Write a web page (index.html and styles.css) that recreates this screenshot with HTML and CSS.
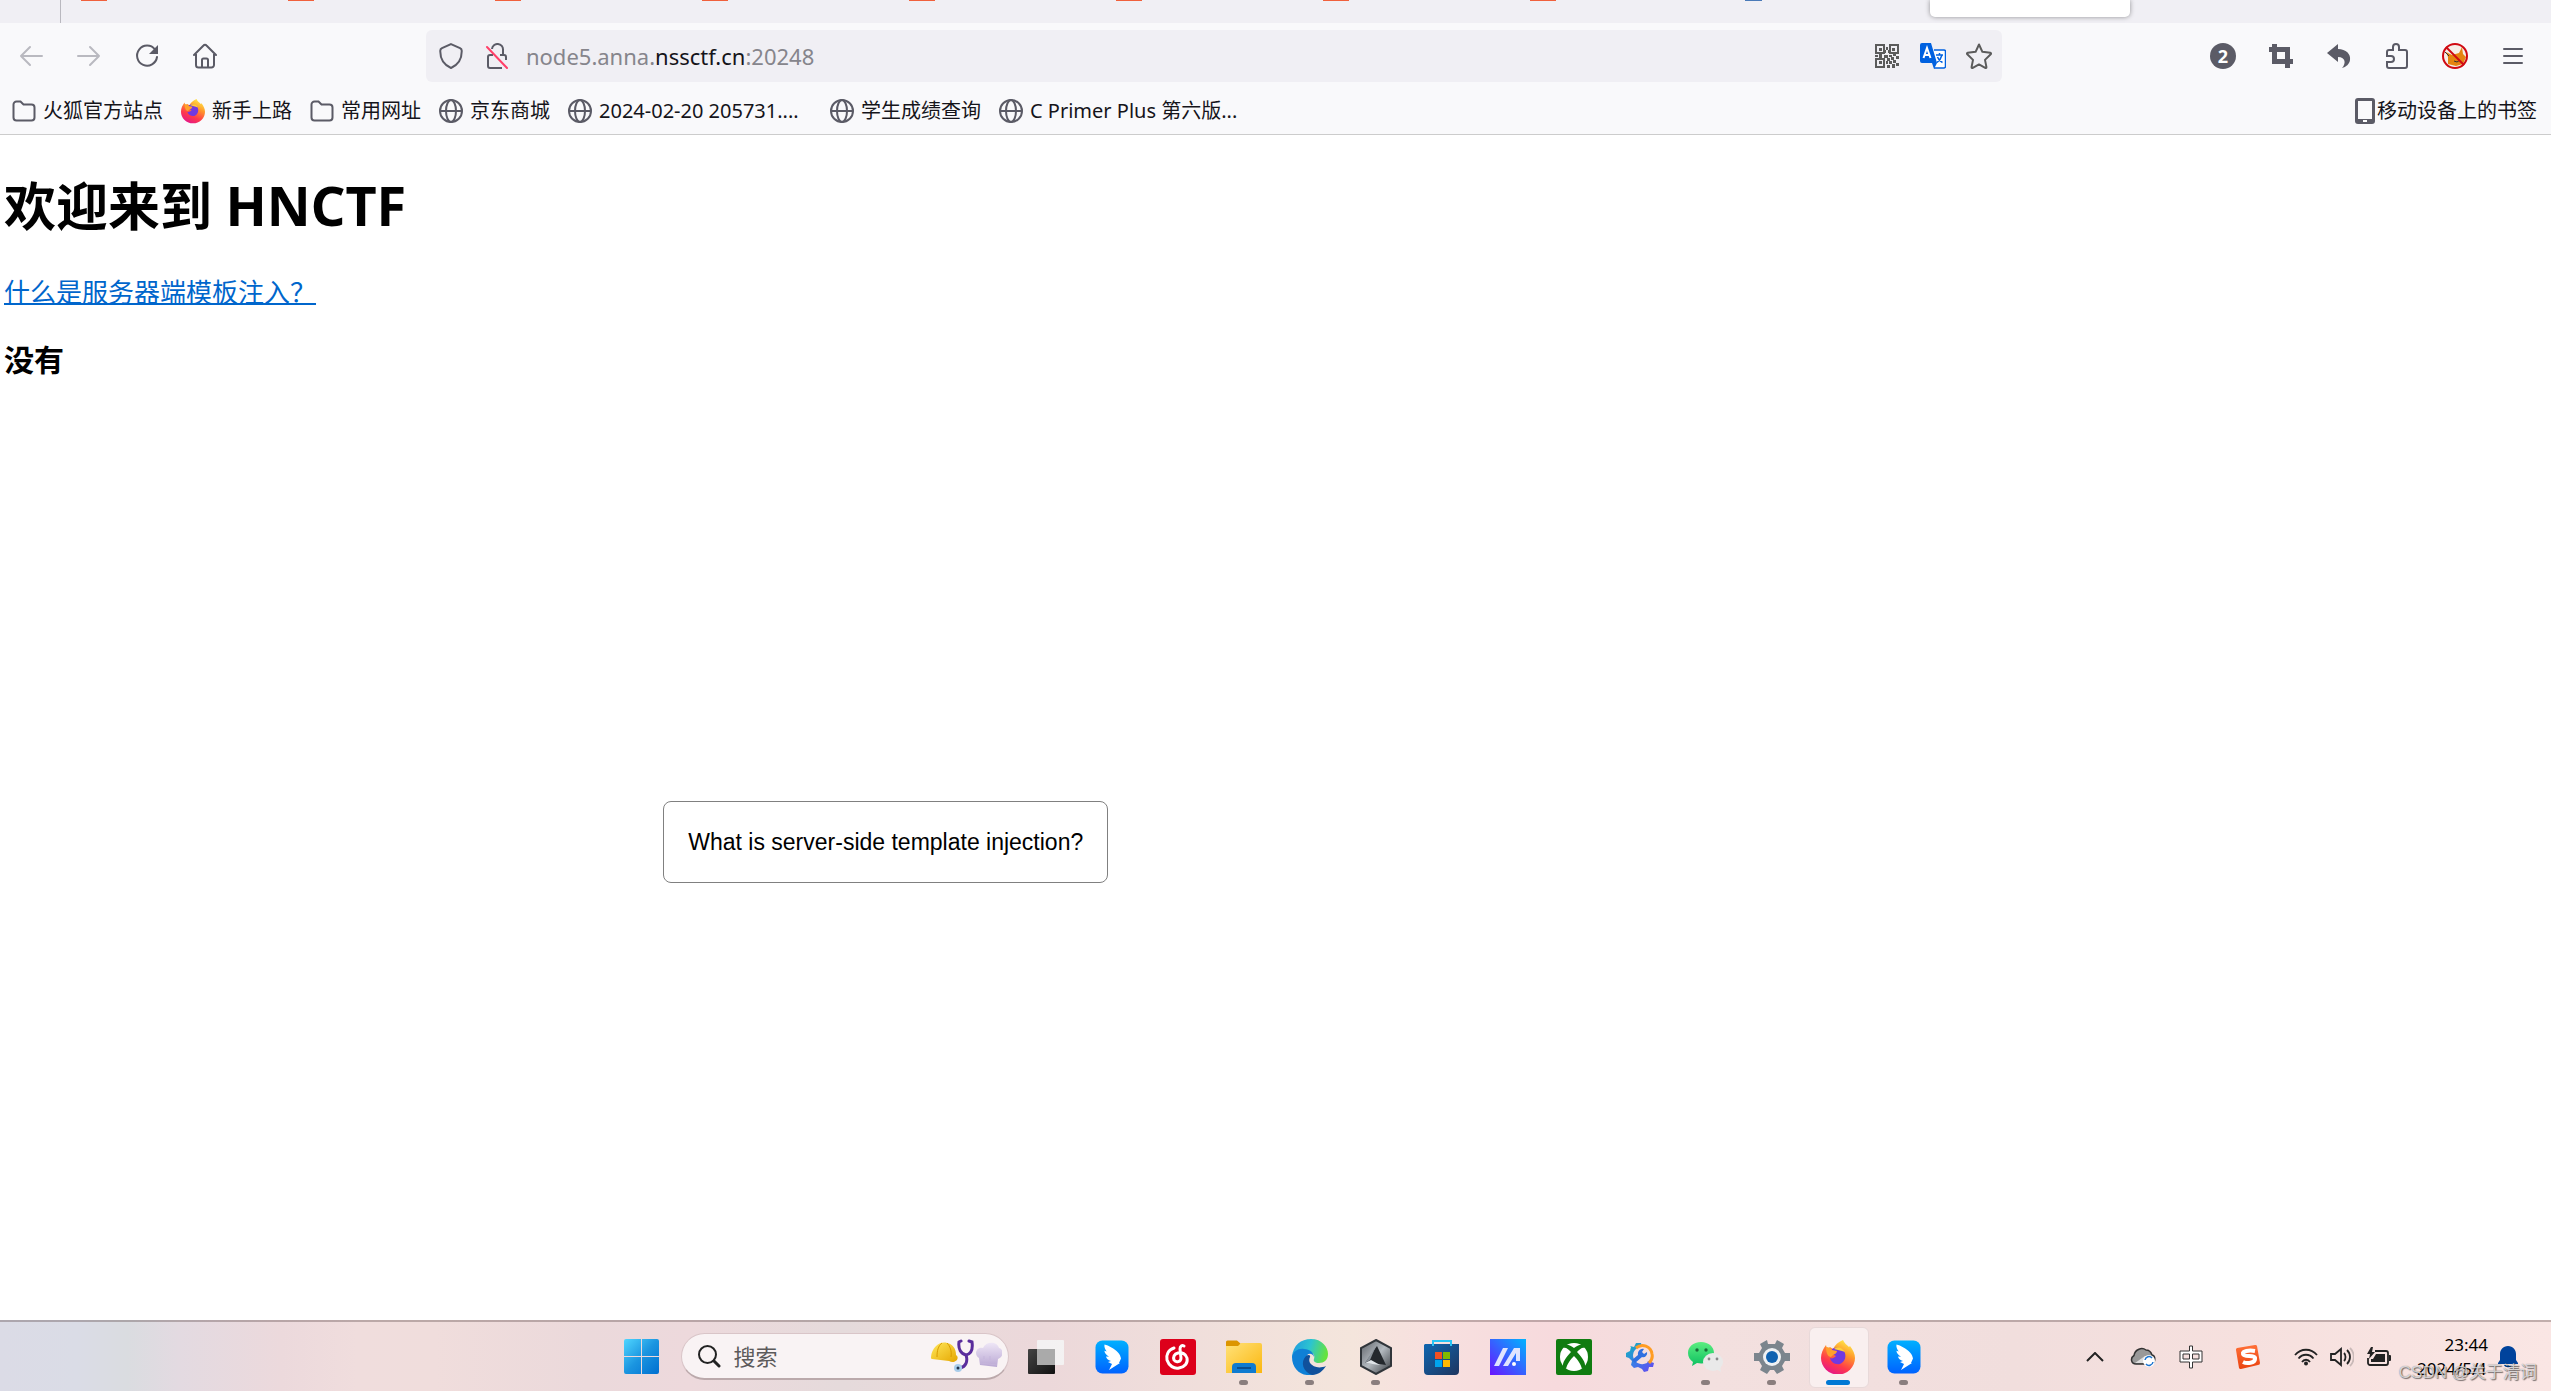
FILE: index.html
```html
<!DOCTYPE html>
<html lang="zh-CN">
<head>
  <meta charset="UTF-8">
  <meta name="viewport" content="width=device-width, initial-scale=1.0">
  <title>HNCTF</title>
  <link rel="stylesheet" href="styles.css">
</head>
<body>
  <svg class="defs" aria-hidden="true">
    <defs>
      <linearGradient id="gBird" x1="0" y1="0" x2="0" y2="1"><stop offset="0" stop-color="#00b0ff"/><stop offset="1" stop-color="#0062ff"/></linearGradient>
      <linearGradient id="gWin" x1="0" y1="0" x2="1" y2="1"><stop offset="0" stop-color="#4fd6ff"/><stop offset=".5" stop-color="#1b95e0"/><stop offset="1" stop-color="#006fd0"/></linearGradient>
      <linearGradient id="gFox" x1=".8" y1="0" x2=".3" y2="1"><stop offset="0" stop-color="#fff44f"/><stop offset=".35" stop-color="#ff9a2b"/><stop offset=".7" stop-color="#ff3a4a"/><stop offset="1" stop-color="#e3158c"/></linearGradient>
      <linearGradient id="gDir" x1="0" y1="0" x2="1" y2="1"><stop offset="0" stop-color="#ffe27a"/><stop offset="1" stop-color="#fbb710"/></linearGradient>
      <linearGradient id="gEdge" x1="0" y1=".2" x2="1" y2=".4"><stop offset="0" stop-color="#1f9be0"/><stop offset=".5" stop-color="#2cc4d0"/><stop offset="1" stop-color="#66e33c"/></linearGradient>
      <linearGradient id="gStore" x1="0" y1="0" x2="1" y2="1"><stop offset="0" stop-color="#0f66b0"/><stop offset="1" stop-color="#1e355f"/></linearGradient>
      <linearGradient id="gArm" x1="0" y1="1" x2="1" y2="0"><stop offset="0" stop-color="#6a12ff"/><stop offset="1" stop-color="#00b4ff"/></linearGradient>
      <linearGradient id="gTool" x1="0" y1="0" x2="1" y2="1"><stop offset="0" stop-color="#10b8b8"/><stop offset=".5" stop-color="#3b7be8"/><stop offset="1" stop-color="#6a45f0"/></linearGradient>
      <linearGradient id="gChat" x1="0" y1="0" x2="0" y2="1"><stop offset="0" stop-color="#5ced80"/><stop offset="1" stop-color="#0cc060"/></linearGradient>
      <linearGradient id="gHex" x1="0" y1="0" x2="1" y2="1"><stop offset="0" stop-color="#5b6066"/><stop offset=".5" stop-color="#b4bac0"/><stop offset="1" stop-color="#34383d"/></linearGradient>
      <linearGradient id="gDark" x1="0" y1="0" x2="1" y2="1"><stop offset="0" stop-color="#444"/><stop offset="1" stop-color="#111"/></linearGradient>
      <linearGradient id="gHat" x1="0" y1="0" x2="0" y2="1"><stop offset="0" stop-color="#eee6f6"/><stop offset="1" stop-color="#b9a7d3"/></linearGradient>
      <linearGradient id="gHelm" x1="0" y1="0" x2="1" y2="1"><stop offset="0" stop-color="#ffe75a"/><stop offset="1" stop-color="#e5a600"/></linearGradient>
      <linearGradient id="gSogou" x1="0" y1="0" x2="0" y2="1"><stop offset="0" stop-color="#ff7038"/><stop offset="1" stop-color="#ea4310"/></linearGradient>
    </defs>
    <symbol id="folder" viewBox="0 0 24 24">
      <path d="M1.500 5.500a3 3 0 0 1 3-3h4l3 3h8a3 3 0 0 1 3 3v10a3 3 0 0 1-3 3h-15a3 3 0 0 1-3-3z" fill="none" stroke="#5b5b66" stroke-width="2"/>
    </symbol>
    <symbol id="globe" viewBox="0 0 24 24">
      <g fill="none" stroke="#5b5b66" stroke-width="2"><circle cx="12" cy="12" r="11"/><ellipse cx="12" cy="12" rx="5" ry="11"/><path d="M1 12h22"/></g>
    </symbol>
    <symbol id="firefox" viewBox="0 0 34 34">
      <path d="M22 0c1 3 4 5 6 7l1-1c3 4 5 8 5 12a17 16.500 0 0 1-34 0c0-5 2-9 5-13l1 4 3-2 3 2c2-4 5-7 10-9z" fill="url(#gFox)"/>
      <path d="M11 9c3-2 9-2 12 2 3 5 1 11-4 13-5 1-9-2-10-6 2 1 4 0 6-2-3-1-5-3-4-7z" fill="#7139e0"/>
      <path d="M5 7c3 0 5 2 6 3l5 1c0 2-2 3-4 4l-2 2c-3 0-5-4-5-10z" fill="#ffa02c"/>
      <path d="M13 9c4-3 9-1 11 3l-3-1z" fill="#ffcf3a"/>
    </symbol>
    <symbol id="bird" viewBox="0 0 34 34">
      <rect x=".5" y=".5" width="33" height="33" rx="7" fill="url(#gBird)"/>
      <path d="M9.500 4.500c4 1 10 4 13.500 8 2 2 2.500 4 3 6l-2 4.500h1L14 30l3-6-4-2 3-1c-3-1-4.500-2.500-5-4.500l3 .3c-3-2-4.500-3.800-4.600-6l2.300.6C10 9 9 7 9.500 4.500z" fill="#fff"/>
    </symbol>
  </svg>

  <header class="browser">
    <div class="tabs">
      <div class="tabs-start"></div>
      <div class="tab"><i></i></div>
      <div class="tab"><i></i></div>
      <div class="tab"><i></i></div>
      <div class="tab"><i></i></div>
      <div class="tab"><i></i></div>
      <div class="tab"><i></i></div>
      <div class="tab"><i></i></div>
      <div class="tab"><i></i></div>
      <div class="tab tab-blue"><i></i></div>
      <div class="tab-active"></div>
    </div>

    <nav class="toolbar">
      <div class="buttons">
        <button aria-label="后退" disabled><svg width="24" height="24" viewBox="0 0 24 24"><path d="M23 12H2M11 3l-9 9 9 9" fill="none" stroke="#b9b9c0" stroke-width="2" stroke-linecap="round" stroke-linejoin="round"/></svg></button>
        <button aria-label="前进" disabled><svg width="24" height="24" viewBox="0 0 24 24"><path d="M1 12h21M13 3l9 9-9 9" fill="none" stroke="#b9b9c0" stroke-width="2" stroke-linecap="round" stroke-linejoin="round"/></svg></button>
        <button aria-label="刷新"><svg width="24" height="24" viewBox="0 0 24 24"><path d="M20 5.500A10 10 0 1 0 22 13" fill="none" stroke="#5b5b66" stroke-width="2" stroke-linecap="round"/><path d="M23 1v9h-9z" fill="#5b5b66"/></svg></button>
        <button aria-label="主页"><svg width="24" height="26" viewBox="0 0 24 26"><path d="M1 12L10.500 2.500a2 2 0 0 1 3 0L23 12M3 11v11a2.500 2.500 0 0 0 2.500 2.500h13A2.500 2.500 0 0 0 21 22V11M9 24v-7a1.500 1.500 0 0 1 1.500-1.500h3A1.500 1.500 0 0 1 15 17v7" fill="none" stroke="#5b5b66" stroke-width="2" stroke-linecap="round"/></svg></button>
      </div>
      <div class="spacer"></div>
      <div class="urlbar">
        <button aria-label="跟踪保护"><svg width="24" height="26" viewBox="0 0 24 26"><path d="M12 1.200l9 4c1 .5 1.700 1 1.700 2.300C23 15 20 21.500 12 25 4 21.500 1 15 1.300 7.500c0-1.300.7-1.800 1.700-2.300z" fill="none" stroke="#5b5b66" stroke-width="2"/></svg></button>
        <button aria-label="连接不安全"><svg width="24" height="26" viewBox="0 0 24 26"><path d="M7 6a5.500 5.500 0 0 1 11 1v4M15 12h4a2 2 0 0 1 2 2v3M3 13.500V23a2 2 0 0 0 2 2h12M3 14a2 2 0 0 1 2-2h3" fill="none" stroke="#5b5b66" stroke-width="2"/><path d="M2 4l20 21" stroke="#ff4069" stroke-width="2" stroke-linecap="round"/></svg></button>
        <div class="address">node5.anna.<b>nssctf.cn</b>:20248</div>
        <button aria-label="二维码"><svg width="24" height="24" viewBox="0 0 24 24"><g fill="none" stroke="#5b5b5b" stroke-width="2"><path d="M1 1h8v8H1zM15 1h8v8h-8zM1 15h8v8H1z"/></g><path fill="#5b5b5b" d="M4 4h3v3H4zM17 4h3v3h-3zM4 17h3v3H4zM11 3h2v3h-2zM9 6h2v3H9zM13 6h2v3h-2zM0 11h3v2H0zM4 10h3v4H4zM9 11h4v3H9zM14 11h3v2h-3zM18 10h3v2h-3zM21 12h3v3h-3zM12 14h3v3h-3zM16 13h3v3h-3zM18 16h3v3h-3zM14 17h3v3h-3zM21 19h3v3h-3zM17 20h3v4h-3zM11 17h2v3h-2zM12 21h3v3h-3z"/></svg></button>
        <button aria-label="翻译"><svg width="26" height="26" viewBox="0 0 26 26"><path d="M14 7h10a1.500 1.500 0 0 1 1.500 1.500v15A1.500 1.500 0 0 1 24 25H14" fill="#fff" stroke="#0061e0" stroke-width="1.500"/><path d="M2 0h9l6 20-3 6-2-6H2a2 2 0 0 1-2-2V2a2 2 0 0 1 2-2z" fill="#0061e0"/><path d="M3.500 15L7 5l3.500 10M4.800 12h4.500" fill="none" stroke="#fff" stroke-width="2"/><path d="M16 12h7M19.500 10v2M22 12c-1 4-3 6-5 7.500M17.500 14c1 3 3 4.500 5 5.500" fill="none" stroke="#0061e0" stroke-width="1.500"/></svg></button>
        <button aria-label="收藏"><svg width="26" height="26" viewBox="0 0 26 26"><path d="M13 1.500l3.400 7.300 7.900 1c.8.200 1 .9.400 1.500L19 16.900l1.400 7c.1.900-.5 1.300-1.200.9L13 21.400l-6.200 3.400c-.7.400-1.300 0-1.200-.9l1.400-7-5.700-5.600c-.6-.6-.4-1.300.4-1.500l7.900-1z" fill="none" stroke="#5b5b5b" stroke-width="2" stroke-linejoin="round"/></svg></button>
      </div>
      <div class="spacer"></div>
      <div class="buttons">
        <button aria-label="通知"><span class="count">2</span></button>
        <button aria-label="截图"><svg width="24" height="24" viewBox="0 0 24 24"><path d="M5.500 0v17.500H24M0 5.500h18.500V24" fill="none" stroke="#5b5b66" stroke-width="5"/></svg></button>
        <button aria-label="撤销"><svg width="24" height="24" viewBox="0 0 24 24"><path d="M11 0v5c8 0 13 5 12 11-.5 4-4 7-8 8 4-4 4-11-4-11v5L0 9z" fill="#5b5b66"/></svg></button>
        <button aria-label="扩展"><svg width="24" height="26" viewBox="0 0 24 26"><path d="M2 13V9a2 2 0 0 1 2-2h4V4a3 3 0 0 1 6 0v3h6a2 2 0 0 1 2 2v14a2 2 0 0 1-2 2H4a2 2 0 0 1-2-2v-4h4a3 3 0 0 0 0-6z" fill="none" stroke="#5b5b66" stroke-width="2"/></svg></button>
        <button aria-label="代理已停用"><svg width="26" height="26" viewBox="0 0 26 26"><circle cx="13" cy="13" r="12" fill="#f6efe9"/><path d="M6 14l-2-5 6 3 7-2 3-6 1 7 3 3-3 7-7 2-8-2z" fill="#e58410"/><path d="M7 13l-4-4M12 18l3 1 3-2" stroke="#333" fill="none"/><circle cx="13" cy="13" r="12" fill="none" stroke="#d00a12" stroke-width="2"/><path d="M4 4l18 18" stroke="#d00a12" stroke-width="2"/></svg></button>
        <button aria-label="菜单"><svg width="20" height="16" viewBox="0 0 20 16"><path d="M1 1h18M1 8h18M1 15h18" stroke="#5b5b66" stroke-width="2" stroke-linecap="round"/></svg></button>
      </div>
    </nav>

    <nav class="bookmarks">
      <a href="#"><svg><use href="#folder"/></svg>火狐官方站点</a>
      <a href="#"><svg><use href="#firefox"/></svg>新手上路</a>
      <a href="#"><svg><use href="#folder"/></svg>常用网址</a>
      <a href="#"><svg><use href="#globe"/></svg>京东商城</a>
      <a href="#" class="long"><svg><use href="#globe"/></svg>2024-02-20 205731....</a>
      <a href="#"><svg><use href="#globe"/></svg>学生成绩查询</a>
      <a href="#"><svg><use href="#globe"/></svg>C Primer Plus 第六版...</a>
      <a href="#" class="mobile"><svg viewBox="0 0 20 26"><rect width="20" height="26" rx="3" fill="#5b5b66"/><path d="M3 3h14v18H3z" fill="#f9f9fb"/><path d="M8 23h4" stroke="#fff" stroke-width="2"/></svg>移动设备上的书签</a>
    </nav>
  </header>

  <main class="content">
    <h1>欢迎来到 <span class="latin">HNCTF</span></h1>
    <a href="#" class="question">什么是服务器端模板注入？</a>
    <h3>没有</h3>
    <div class="tooltip" role="tooltip">What is server-side template injection?</div>
  </main>

  <footer class="taskbar">
    <div class="apps">
      <button aria-label="开始"><svg width="35" height="35" viewBox="0 0 35 35"><path d="M2 0h15v17H0V2a2 2 0 0 1 2-2zM18 0h15a2 2 0 0 1 2 2v15H18zM0 18h17v17H2a2 2 0 0 1-2-2zM18 18h17v15a2 2 0 0 1-2 2H18z" fill="url(#gWin)"/></svg></button>
      <label class="search">
        <svg width="24" height="24" viewBox="0 0 24 24"><circle cx="10.500" cy="10.500" r="8.500" fill="none" stroke="#222" stroke-width="2"/><path d="M17 17l5 5" stroke="#222" stroke-width="3" stroke-linecap="round"/></svg>
        <input type="text" placeholder="搜索" aria-label="搜索">
        <svg width="72" height="34" viewBox="0 0 72 34">
          <path d="M1 18C2 8 10 2 17 4c6 1 9 6 9 12 2 1 2 3 1 5-2 2-5 3-8 1L2 20c-1 0-1-1-1-2z" fill="url(#gHelm)"/>
          <path d="M12 4c-4 3-5 8-5 14M17 4c3 3 5 8 4 14" fill="none" stroke="#d99b00"/>
          <path d="M31 2l-2 1c-1 7 2 12 7 13 5-1 7-6 6-13l-3-1M36 16c2 6 0 12-6 13" fill="none" stroke="#5a2d9c" stroke-width="3" stroke-linecap="round"/>
          <circle cx="28" cy="29" r="4" fill="#a9cdea"/><circle cx="28" cy="29" r="1.500" fill="#23324a"/>
          <path d="M49 19c-6-4-2-12 4-10 3-7 14-7 16 0 5 1 5 9-1 11l-1 8-17-2z" fill="url(#gHat)"/>
          <path d="M50 24l17 2M54 20v-3M60 21v-4" stroke="#c5b5db" fill="none"/>
        </svg>
      </label>
      <button aria-label="任务视图"><svg width="36" height="36" viewBox="0 0 36 36"><rect y="10" width="27" height="25" rx="1" fill="url(#gDark)"/><rect x="9" y="1" width="27" height="25" rx="1" fill="#f4f4f4" opacity=".9"/><path d="M9 10h18v16H9z" fill="#aaa"/></svg></button>
      <button aria-label="钉钉"><svg width="34" height="34"><use href="#bird"/></svg></button>
      <button aria-label="网易云音乐"><svg width="36" height="36" viewBox="0 0 36 36"><rect width="36" height="36" rx="3" fill="#dd001b"/><path d="M14 9C8 11 6 16 7 21c2 6 7 9 12 8 6-1 9-5 8-10-1-4-5-6-9-5-4 1-5 4-4 7 2 3 7 2 7-2L20 10c0-3 2-4 4-3" fill="none" stroke="#fff" stroke-width="3" stroke-linecap="round"/></svg></button>
      <button class="open" aria-label="文件资源管理器"><svg width="36" height="34" viewBox="0 0 36 34"><path d="M0 2a1.500 1.500 0 0 1 1.500-1.500H11l4 3.500-3 5H0z" fill="#dc9500"/><path d="M0 6h12l3-3h19a2 2 0 0 1 2 2v28H0z" fill="url(#gDir)"/><path d="M6 33V27a4 4 0 0 1 4-4h16a4 4 0 0 1 4 4v6z" fill="#0f7bd0"/><path d="M11 28h14" stroke="#0a4f90" stroke-width="2"/></svg></button>
      <button class="open" aria-label="Edge"><svg width="36" height="36" viewBox="0 0 36 36"><path d="M0 18C1 6 9 0 19 0c11 0 17 8 17 15 0 6-4 9-9 9-4 0-6-2-5-4 1-3 0-6-4-7-5-1-10 2-10 9z" fill="url(#gEdge)"/><path d="M0 18c1-6 7-9 12-8 6 0 10 4 10 8-2-5-8-4-8 2 0 7 4 13 9 15C12 39 0 32 0 18z" fill="#0f80d6"/><path d="M14 17c-6 6-3 16 6 19 6 0 11-4 14-9-7 3-13 1-16-3-1-2-1-4 0-6 1-2-2-3-4-1z" fill="#10519c"/></svg></button>
      <button class="open" aria-label="Armoury"><svg width="34" height="36" viewBox="0 0 34 36"><path d="M17 1l15 8v18l-15 8-15-8V9z" fill="url(#gHex)" stroke="#30353a" stroke-width="2"/><path d="M18 7l9 19-7-1-14-1z" fill="#24282d"/><path d="M6 24L17 7l-6 14z" fill="#8a929a"/><path d="M6 24l6-3 9 5z" fill="#dfe4e8"/></svg></button>
      <button aria-label="应用商店"><svg width="36" height="36" viewBox="0 0 36 36"><path d="M1 5h34v27a4 4 0 0 1-4 4H4a4 4 0 0 1-4-4V6z" fill="url(#gStore)"/><path d="M9 7V2h18v5" fill="none" stroke="#27c4f5" stroke-width="2"/><path d="M11 13h7v7h-7z" fill="#f25022"/><path d="M19 13h7v7h-7z" fill="#7fba00"/><path d="M11 21h7v7h-7z" fill="#00a4ef"/><path d="M19 21h7v7h-7z" fill="#ffb900"/></svg></button>
      <button aria-label="MyASUS"><svg width="36" height="36" viewBox="0 0 36 36"><path d="M0 0h36v36H0z" fill="url(#gArm)"/><path d="M4 27L13 9h5L9 27zM13 27L24 9h6v13h-4v-8l-8 13z" fill="#dfe4ff"/><circle cx="24" cy="25" r="2" fill="#fff"/></svg></button>
      <button aria-label="Xbox"><svg width="36" height="36" viewBox="0 0 36 36"><rect width="36" height="36" rx="2" fill="#107c10"/><circle cx="18" cy="18" r="14" fill="#fff"/><path d="M9 6c3-1 6 1 9 3 3-2 6-4 9-3l2 3c-3-1-5 1-8 4 5 5 9 11 8 15l-3 2c-1-5-5-10-8-13-3 3-7 8-8 13l-3-2c-1-4 3-10 8-15-3-3-5-5-8-4z" fill="#107c10"/></svg></button>
      <button aria-label="电脑管家"><svg width="28" height="30" viewBox="0 0 28 30"><path d="M4 4l4 1 2-4 5 0 1 4c-6 0-9 4-9 9 1 7 8 10 14 7l1-2 6 2-1 4-4 0-1 4-4 1-2-3-4-2-4 1-3-3 1-4-3-3-3-1 0-4 4-2 1-4z" fill="url(#gTool)"/><path d="M10 6c6-5 15-2 16 6 1 4-1 7-3 9" fill="none" stroke="#ff9c22" stroke-width="3"/><path d="M9 21l7-6a4 4 0 0 0 5-5l-3 2-2-2 2-3a5 5 0 0 0-6 6l-6 5z" fill="#2f6fe0"/></svg></button>
      <button class="open" aria-label="微信"><svg width="36" height="32" viewBox="0 0 36 32"><path d="M13 1C5 1 0 6 0 12c0 4 2 7 5 9l-1 4 5-3c10 2 17-3 17-10C26 6 21 1 13 1z" fill="url(#gChat)"/><ellipse cx="25" cy="21" rx="10" ry="9" fill="#e9e9e9"/><path d="M28 28l5 3-1-6z" fill="#e9e9e9"/><g fill="#176d39"><circle cx="9" cy="9" r="1.700"/><circle cx="18" cy="9" r="1.700"/></g><g fill="#888"><circle cx="21" cy="18" r="1.400"/><circle cx="29" cy="18" r="1.400"/></g></svg></button>
      <button class="open" aria-label="设置"><svg width="36" height="36" viewBox="0 0 36 36"><path d="M14 5l-1-4 -7 4 2 4-3 5-5 0v8l5 0 3 5-2 4 7 4 3-4h4l3 4 7-4-2-4 3-5 5 0v-8l-5 0-3-5 2-4-7-4-2 4z" fill="#7b858d"/><circle cx="18" cy="18" r="9" fill="#eef1f3"/><circle cx="18" cy="18" r="6" fill="#0f62b0"/></svg></button>
      <button class="open active" aria-label="Firefox"><svg width="34" height="34"><use href="#firefox"/></svg></button>
      <button class="open" aria-label="钉钉会议"><svg width="34" height="34"><use href="#bird"/></svg></button>
    </div>

    <div class="tray">
      <button aria-label="显示隐藏的图标"><svg width="18" height="10" viewBox="0 0 18 10"><path d="M1 9l8-8 8 8" fill="none" stroke="#222" stroke-width="2"/></svg></button>
      <button aria-label="OneDrive"><svg width="26" height="20" viewBox="0 0 26 20"><path d="M6 17C1 17 0 11 4 8.500 5 2 12 0 16 3c3 0 5 2 6 5 4 1 4 9-2 9z" fill="#999" stroke="#333" stroke-width="1.500"/><path d="M5 16l10-7 8 1v6z" fill="#ddd"/><circle cx="19" cy="14" r="6" fill="#fff"/><path d="M15 13a4 4 0 0 1 7-2M23 15a4 4 0 0 1-7 2" fill="none" stroke="#1a73d0" stroke-width="1.500"/></svg></button>
      <button aria-label="输入法"><svg width="24" height="24" viewBox="0 0 24 24"><path d="M10.500 1h3v5H23v11h-9.500v6h-3v-6H1V6h9.500zM4 9v5h6.500V9zM13.500 9v5H20V9z" fill="#fff" stroke="#333" fill-rule="evenodd"/></svg></button>
      <button class="sogou" aria-label="搜狗输入法"><svg width="26" height="24" viewBox="0 0 26 24"><path d="M1 5a2 2 0 0 1 1-2L20 0a2 2 0 0 1 2 1l3 17a2 2 0 0 1-2 2L6 24a2 2 0 0 1-2-1z" fill="url(#gSogou)"/><path d="M20 6c-6-1-13 0-12 3 1 4 13 0 12 5 0 4-8 5-12 3" fill="none" stroke="#fff" stroke-width="4"/></svg></button>
      <button class="status" aria-label="网络、音量和电池">
        <svg width="24" height="18" viewBox="0 0 24 18"><g fill="none" stroke="#222" stroke-width="1.800"><path d="M1 7c6-7 16-7 22 0M4.500 10.500c4-5 11-5 15 0M8 14c2-3 6-3 8 0"/></g><circle cx="12" cy="15.500" r="2" fill="#222"/></svg>
        <svg width="24" height="20" viewBox="0 0 24 20"><g fill="none" stroke="#222" stroke-width="1.800"><path d="M1 7h4l6-5v16l-6-5H1zM14 6c2 2 2 6 0 8M17 3c4 4 4 10 0 14"/><path d="M20 1c5 5 5 13 0 18" stroke="#c9b9b8"/></g></svg>
        <svg width="26" height="20" viewBox="0 0 26 20"><path d="M9 4h11a2 2 0 0 1 2 2v10a2 2 0 0 1-2 2H4a2 2 0 0 1-2-2v-5" fill="none" stroke="#222" stroke-width="1.800"/><path d="M10 7h9v8H5v-3h2zM23 8h1a1 1 0 0 1 1 1v4a1 1 0 0 1-1 1h-1zM5 0L1 7h3l-1 5 6-7H6l1-5z" fill="#222"/></svg>
      </button>
      <button class="clock"><time>23:44<br>2024/5/1</time></button>
      <button class="bell" aria-label="通知中心"><svg width="20" height="22" viewBox="0 0 20 22"><path d="M10 0c5 0 8 4 8 8v6l2 3v1H0v-1l2-3V8c0-4 3-8 8-8zM6 19h8c-1 3-7 3-8 0z" fill="#00439c"/></svg></button>
    </div>
    <div class="watermark">CSDN @关于清词</div>
  </footer>
</body>
</html>
```
FILE: styles.css
```css
* { box-sizing: border-box; }
body { margin: 0; min-height: 100vh; display: flex; flex-direction: column; background: #fff; color: #000; font-family: "Noto Sans", "Noto Sans CJK SC", sans-serif; }
button { display: flex; align-items: center; justify-content: center; margin: 0; padding: 0; border: 0; background: none; font: inherit; color: inherit; }
svg { flex: none; display: block; }
.defs { position: absolute; width: 0; height: 0; }

/* browser chrome */
.browser { background: #f9f9fb; border-bottom: 1px solid #ccc; color: #15141a; }
.tabs { display: flex; height: 23px; background: #f0eff4; }
.tabs-start { width: 61px; border-right: 1px solid #b9b8bf; }
.tab { width: 207px; padding-left: 20px; }
.tab i { display: block; width: 26px; height: 1px; background: #f0603c; }
.tab-blue { padding-left: 28px; }
.tab-blue i { width: 17px; background: #4a7ab8; }
.tab-active { width: 200px; height: 17px; margin-left: 6px; background: #fff; border-radius: 0 0 5px 5px; box-shadow: 0 0 5px rgba(0, 0, 0, 0.4); clip-path: inset(0 -6px -6px -6px); }

.toolbar { display: flex; align-items: center; padding: 7px 9px 0 2px; }
.buttons { display: flex; }
.buttons button { width: 58px; height: 52px; }
.spacer { flex: 5; }
.urlbar { flex: 41; display: flex; align-items: center; height: 52px; padding-left: 2px; background: #f0eff4; border-radius: 6px; }
.urlbar button { width: 46px; height: 52px; }
.address { flex: 1; padding-left: 6px; font-size: 22px; line-height: 30px; color: #86858c; }
.address b { font-weight: normal; color: #15141a; }
.count { width: 26px; height: 26px; border-radius: 50%; background: #5b5b66; color: #fff; font-size: 18px; line-height: 26px; font-weight: bold; }

.bookmarks { display: flex; align-items: center; gap: 18px; height: 52px; padding: 6px 14px 0 12px; font-size: 20px; line-height: 28px; white-space: nowrap; }
.bookmarks a { display: flex; align-items: center; gap: 7px; color: #15141a; text-decoration: none; }
.bookmarks svg { width: 24px; height: 26px; }
.bookmarks .long { width: 244px; }
.bookmarks .mobile { margin-left: auto; gap: 2px; }
.bookmarks .mobile svg { width: 20px; }

/* page */
.content { position: relative; flex: 1; padding: 36px 4px; }
h1 { margin: 0 0 34px; font-size: 52px; line-height: 68px; }
h1 .latin { font-size: 54px; }
.question { display: block; width: max-content; font-size: 26px; line-height: 36px; color: #0066cc; text-decoration-thickness: 2px; }
h3 { margin: 30px 0 0; font-size: 30px; line-height: 40px; }
.tooltip { position: absolute; left: 26%; top: 666px; padding: 24px; border: 1px solid #808080; border-radius: 8px; background: #fff; font-family: "Liberation Sans", sans-serif; font-size: 23px; line-height: 32px; }

/* taskbar */
.taskbar { position: relative; display: grid; grid-template-columns: 1fr auto 1fr; height: 71px; padding-right: 6px; border-top: 2px solid rgba(90, 70, 70, 0.35); background: linear-gradient(90deg, #dbdbe6 0, #dadce6 3%, #dadce0 5%, #e3dae1 7%, #ecd9dc 11%, #f0dddd 14%, #f0dddc 17%, #ebd9db 23%, #edd9dc 27%, #e5dadb 33%, #ecd8da 41%, #f4e5dc 53%, #f7e0df 56%, #f7dadd 61%, #f3e0df 67%, #f1dedd 79%, #f6e0de 88%, #fae6e4 100%) border-box; }
.apps { grid-column: 2; display: flex; align-items: center; }
.apps button { position: relative; width: 66px; height: 69px; }
.apps .open::after { content: ""; position: absolute; bottom: 6px; left: 28px; width: 9px; height: 5px; border-radius: 3px; background: #8a7e7e; }
.apps .active::before { content: ""; position: absolute; left: 4px; top: 5px; width: 58px; height: 59px; border: 1px solid #e8d9d9; border-radius: 6px; background: #f9efef; }
.apps .active svg { position: relative; }
.apps .active::after { left: 21px; width: 24px; background: #0078d4; }
.search { display: flex; align-items: center; width: 328px; height: 47px; margin: 0 4px 0 6px; padding: 0 6px 0 15px; border: 1px solid #d9c5c8; border-bottom: 2px solid #bba9ab; border-radius: 24px; background: #f9f3f4; }
.search input { flex: 1; min-width: 0; margin-left: 13px; padding: 0; border: 0; outline: 0; background: none; font: 22px/30px "Noto Sans", "Noto Sans CJK SC", sans-serif; }
.search input::placeholder { color: #5c5a5b; opacity: 1; }

.tray { display: flex; align-items: center; justify-content: flex-end; padding-right: 17px; }
.tray button { width: 48px; height: 69px; }
.tray .sogou { width: 66px; }
.tray .status { width: 119px; gap: 12px; padding-right: 8px; justify-content: flex-end; }
.tray .clock { width: 88px; justify-content: flex-end; text-align: right; font-size: 17px; line-height: 24px; }
.tray .bell { width: 40px; }
.watermark { position: absolute; right: 14px; bottom: 6px; font: 17px/24px "Liberation Sans", "Noto Sans CJK SC", sans-serif; color: rgba(255, 255, 255, 0.7); text-shadow: 1px 1px 1px rgba(0, 0, 0, 0.5), 0 0 1px rgba(0, 0, 0, 0.5); }
```
